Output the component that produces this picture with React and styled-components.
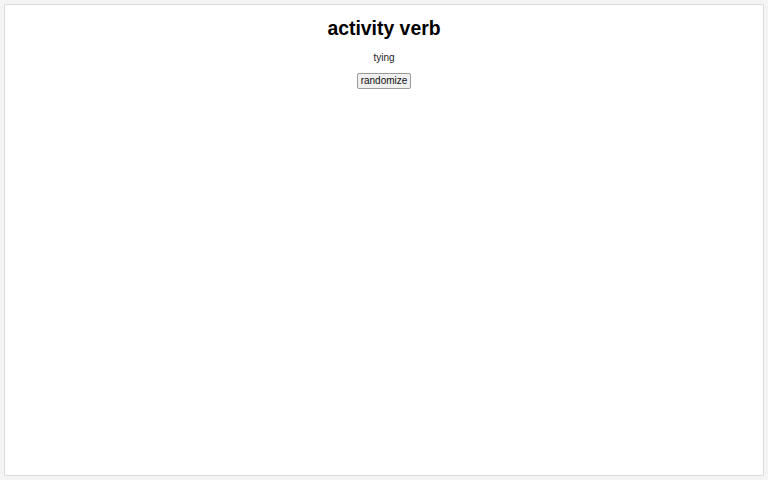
import styled, { createGlobalStyle } from "styled-components";

const Global = createGlobalStyle`
  html, body {
    margin: 0;
    padding: 0;
    background: #f4f4f4;
    font-family: "Liberation Sans", Arial, sans-serif;
  }
`;

const Page = styled.div`
  box-sizing: border-box;
  width: 768px;
  height: 480px;
  padding: 4px;
`;

const Card = styled.div`
  box-sizing: border-box;
  height: 472px;
  background: #fff;
  border: 1px solid #dcdcdc;
  display: flex;
  flex-direction: column;
  align-items: center;
  padding-top: 11px;
`;

const Title = styled.h1`
  margin: 0;
  font-size: 19.4px;
  font-weight: bold;
  color: #000;
  line-height: 24px;
`;

const Word = styled.p`
  margin: 12px 0 0;
  font-size: 10px;
  line-height: 12px;
  color: #222;
`;

const Button = styled.button`
  margin-top: 9px;
  font-family: "Liberation Sans", Arial, sans-serif;
  font-size: 10px;
  line-height: 12px;
  padding: 1px 3px;
  background: #f0f0f0;
  border: 1px solid #9a9a9a;
  border-radius: 2px;
  color: #111;
`;

export default function App() {
  return (
    <>
      <Global />
      <Page>
        <Card>
          <Title>activity verb</Title>
          <Word>tying</Word>
          <Button>randomize</Button>
        </Card>
      </Page>
    </>
  );
}
